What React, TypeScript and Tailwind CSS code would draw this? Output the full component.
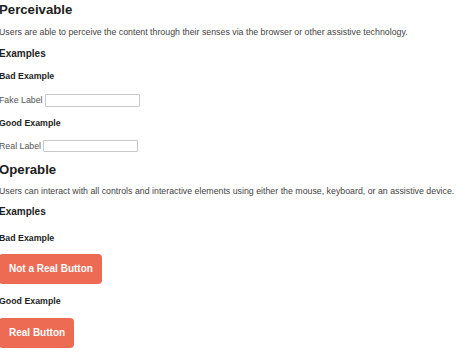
export default function App() {
  return (
    <div
      className="w-[474px] h-[355px] overflow-hidden bg-white text-[#1e1e1e]"
      style={{ fontFamily: '"Liberation Sans", Arial, sans-serif' }}
    >
      <div className="-ml-px flex flex-col items-start">
        <h2 className="mt-[2px] text-[13.2px] leading-[16px] font-bold">Perceivable</h2>
        <p className="mt-[8px] text-[8.8px] leading-[12px] text-[#444]">
          Users are able to perceive the content through their senses via the browser or other assistive technology.
        </p>
        <h3 className="mt-[9.5px] text-[10px] leading-[12px] font-bold">Examples</h3>
        <h4 className="mt-[10.7px] text-[8.8px] leading-[12px] font-bold">Bad Example</h4>
        <div className="mt-[11.8px] flex items-center h-[13px] gap-[2px]">
          <span className="text-[8.8px] leading-[12px] text-[#555]">Fake Label</span>
          <input className="w-[95px] h-[13px] border border-[#c8c8c8] rounded-[1px]" />
        </div>
        <h4 className="mt-[10.2px] text-[8.8px] leading-[12px] font-bold">Good Example</h4>
        <div className="mt-[10.8px] flex items-center h-[12px] gap-[2px]">
          <label className="text-[8.8px] leading-[12px] text-[#555]">Real Label</label>
          <input className="w-[95px] h-[12px] border border-[#c8c8c8] rounded-[1px]" />
        </div>
        <h2 className="mt-[10.5px] text-[13.2px] leading-[16px] font-bold">Operable</h2>
        <p className="mt-[6.5px] text-[8.8px] leading-[12px] text-[#444]">
          Users can interact with all controls and interactive elements using either the mouse, keyboard, or an assistive device.
        </p>
        <h3 className="mt-[9.5px] text-[10px] leading-[12px] font-bold">Examples</h3>
        <h4 className="mt-[13.7px] text-[8.8px] leading-[12px] font-bold">Bad Example</h4>
        <div className="mt-[9.8px] h-[30px] pl-[10px] pr-[9px] flex items-center rounded-[4px] bg-[#ed6a53] text-white text-[10px] font-bold">
          Not a Real Button
        </div>
        <h4 className="mt-[11.2px] text-[8.8px] leading-[12px] font-bold">Good Example</h4>
        <button className="mt-[10.8px] h-[30px] pl-[10px] pr-[9px] flex items-center rounded-[4px] bg-[#ed6a53] text-white text-[10px] font-bold">
          Real Button
        </button>
      </div>
    </div>
  );
}
